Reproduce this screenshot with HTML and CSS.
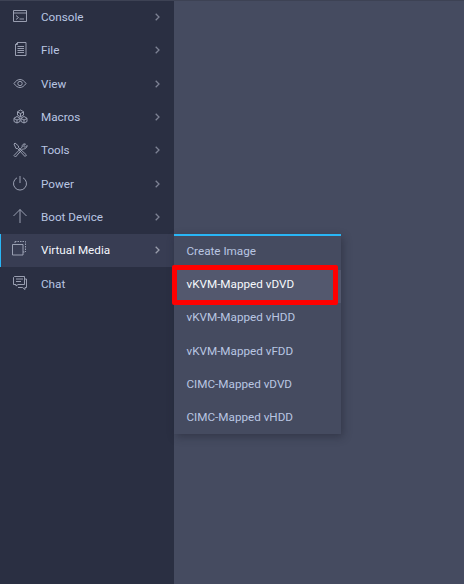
FILE: index.html
```html
<!DOCTYPE html>
<html lang="en">
<head>
<meta charset="utf-8">
<title>Virtual Media</title>
<link rel="stylesheet" href="styles.css">
</head>
<body>
<div class="screen">
  <nav class="menu">
    <div class="row"><svg class="ico" viewBox="0 0 16 16"><path d="M1.500 2.500h13v11h-13zM1.500 5h13M4 7.500l2.500 2-2.500 2M7.500 11h4.500"/></svg><span class="lab">Console</span><svg class="chev" viewBox="0 0 5 8"><path d="M.7.7L4 4 .7 7.300"/></svg></div>
    <div class="row"><svg class="ico" viewBox="0 0 16 16"><path d="M5.500 1.500h8.500v13H3.500V3.500zM5.500 1.500v2h-2M5.500 5.500h6.500M5.500 7.500h6.500M5.500 9.500h6.500M5.500 11.500h6.500"/></svg><span class="lab">File</span><svg class="chev" viewBox="0 0 5 8"><path d="M.7.7L4 4 .7 7.300"/></svg></div>
    <div class="row"><svg class="ico" viewBox="0 0 16 16"><path d="M2 8.500c1.800-2.600 3.800-4 6-4s4.200 1.400 6 4c-1.800 2.600-3.800 4-6 4s-4.200-1.400-6-4z"/><circle cx="8" cy="8.500" r="2.200"/></svg><span class="lab">View</span><svg class="chev" viewBox="0 0 5 8"><path d="M.7.7L4 4 .7 7.300"/></svg></div>
    <div class="row"><svg class="ico" viewBox="0 0 16 16"><path d="M8.500 2l3 1.700v3.400l-3 1.700-3-1.700V3.700zM5.500 4l3 1.500 3-1.500M8.500 5.500v3.300M5 8.500l3 1.700v3.300l-3 1.500-3-1.500v-3.300zM2 10.500l3 1.500 3-1.500M5 12v3M12 8.500l3 1.700v3.300l-3 1.500-3-1.500v-3.300zM9 10.500l3 1.500 3-1.500M12 12v3"/></svg><span class="lab">Macros</span><svg class="chev" viewBox="0 0 5 8"><path d="M.7.7L4 4 .7 7.300"/></svg></div>
    <div class="row"><svg class="ico" viewBox="0 0 16 16"><path d="M2 3l1-1 3.500 3v1.500l8 7.500-1.500 1.500-7.500-8H4zM15 4.500l-2 2-1.500-1.500 2-2c-2-.6-3.800.9-3.300 3L2 14.500 3.500 16 10.500 8c2 .5 5-1.300 4.500-3.500z"/></svg><span class="lab">Tools</span><svg class="chev" viewBox="0 0 5 8"><path d="M.7.7L4 4 .7 7.300"/></svg></div>
    <div class="row"><svg class="ico" viewBox="0 0 16 16"><path d="M5 2.800a6.500 6.500 0 1 0 6 0M8 1v7"/></svg><span class="lab">Power</span><svg class="chev" viewBox="0 0 5 8"><path d="M.7.7L4 4 .7 7.300"/></svg></div>
    <div class="row"><svg class="ico" viewBox="0 0 16 16"><path d="M1.500 8L8 1.500 14.500 8M8 1.500V15"/></svg><span class="lab">Boot Device</span><svg class="chev" viewBox="0 0 5 8"><path d="M.7.7L4 4 .7 7.300"/></svg></div>
    <div class="row on"><svg class="ico" viewBox="0 0 16 16"><path class="dash" d="M3 .5h10.500V11"/><path d="M.5 3.500h10.500v10.500H.5z"/><path class="dash" d="M3 .5v3M11 11h2.500"/></svg><span class="lab">Virtual Media</span><svg class="chev" viewBox="0 0 5 8"><path d="M.7.7L4 4 .7 7.300"/></svg></div>
    <div class="row"><svg class="ico" viewBox="0 0 16 16"><path d="M2.500 1.500h10v8H6L4 11V9.500H1.500V2.500zM4 4h7M4 6.500h5M12.500 4h2v8.500H13V14.500l-2.500-2H6"/></svg><span class="lab">Chat</span></div>
  </nav>
  <main class="stage">
    <ul class="submenu">
      <li class="item">Create Image</li>
      <li class="item sel">vKVM-Mapped vDVD</li>
      <li class="item">vKVM-Mapped vHDD</li>
      <li class="item">vKVM-Mapped vFDD</li>
      <li class="item">CIMC-Mapped vDVD</li>
      <li class="item">CIMC-Mapped vHDD</li>
    </ul>
    <div class="mark"></div>
  </main>
</div>
</body>
</html>
```
FILE: styles.css
```css
html, body { margin: 0; padding: 0; }
body { width: 464px; height: 584px; overflow: hidden; background: #454b60; font-family: Roboto, "Liberation Sans", sans-serif; }
.screen { display: flex; height: 584px; }
.menu { width: 174px; flex: none; background: #2a2f42; box-sizing: border-box; padding-top: .33px; box-shadow: inset 0 1px 0 #3d4254; }
.row { height: 33.333px; display: flex; align-items: center; box-sizing: border-box; padding-left: 12px; }
.row.on { background: #383d53; border-left: 1px solid #29b6f6; padding-left: 11px; }
.ico { width: 16px; height: 16px; flex: none; margin-bottom: 2px; overflow: visible; fill: none; stroke: #a6acbd; stroke-width: .9; }
.lab { margin-left: 13px; font-size: 11.7px; color: #b9c6e2; flex: 1; }
.on .lab { color: #f3f6fc; }
.chev { width: 5px; height: 8px; margin-right: 14px; fill: none; stroke: #7d8294; stroke-width: 1.300; }
.on .chev { stroke: #9a9eac; }
.dash { stroke-dasharray: 1.500 1; }
.stage { flex: 1; position: relative; padding-top: 234px; box-shadow: inset 0 1px 0 #3d4254; }
.submenu { list-style: none; margin: 0; padding: .7px 0 0; box-sizing: content-box; width: 167px; height: 197.3px; background: #454b60; border-top: 2px solid #29b6f6; box-shadow: 2px 3px 8px rgba(30, 33, 46, .45); }
.item { height: 33.333px; line-height: 28px; padding-left: 12.5px; font-size: 11.7px; color: #b9c6e2; }
.item.sel { background: #53586e; color: #f6f8fc; }
.mark { position: absolute; left: -2px; top: 265px; width: 156px; height: 30px; border: 5px solid #fe0000; border-radius: 2px; }
```
